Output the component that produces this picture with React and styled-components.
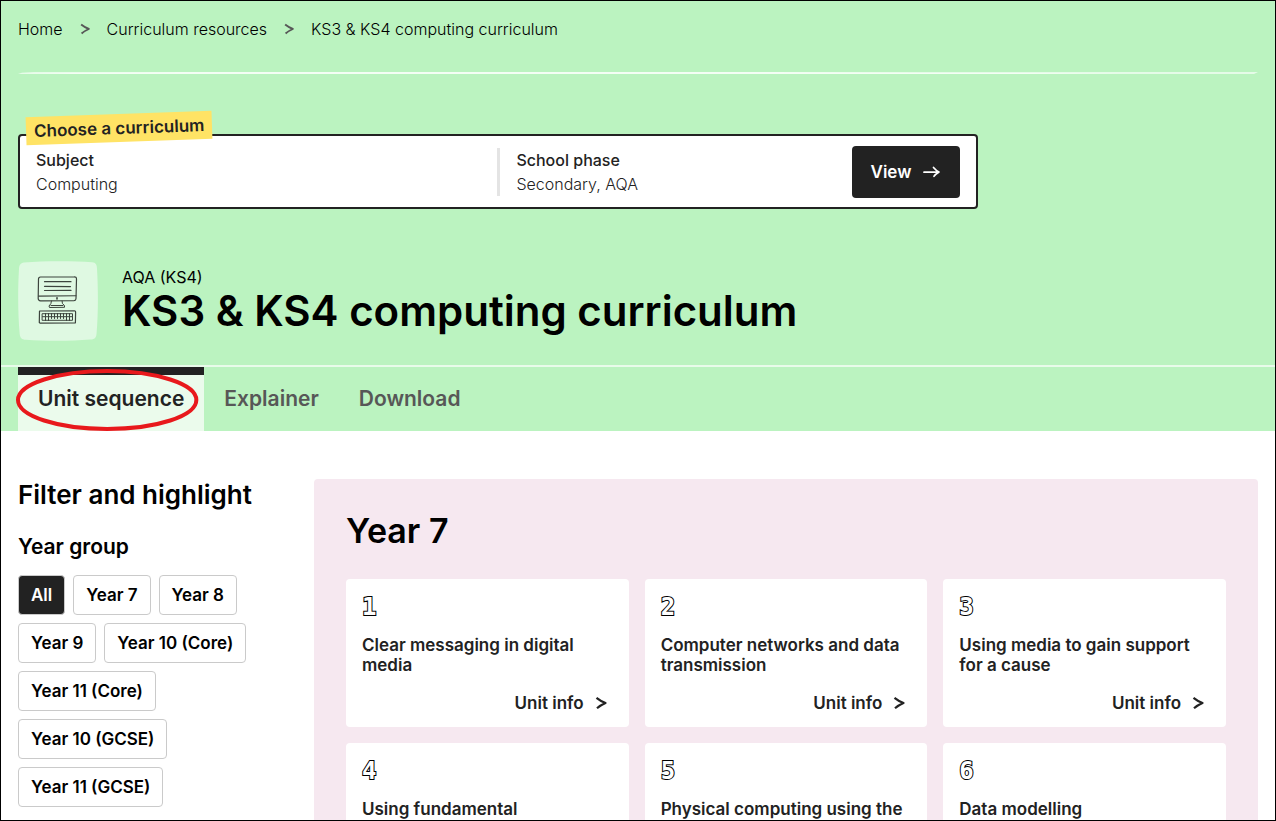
import { useState } from 'react';
import styled, { createGlobalStyle } from 'styled-components';

const GlobalStyle = createGlobalStyle`
  *, *::before, *::after {
    box-sizing: border-box;
  }
  body {
    margin: 0;
    background: #ffffff;
    color: #222222;
    font-family: Inter, "Open Sans", sans-serif;
    font-size: 16px;
    line-height: 24px;
  }
  h1, h2, h3, p, ol, ul {
    margin: 0;
    padding: 0;
  }
  ol, ul {
    list-style: none;
  }
  a {
    color: inherit;
    text-decoration: none;
  }
  button, select {
    font: inherit;
    color: inherit;
    margin: 0;
    cursor: pointer;
  }
  svg {
    display: block;
    flex: none;
  }
`

const Page = styled.div`
  height: 100vh;
  overflow: hidden;
  border: 1px solid #000000;
`
const Header = styled.header`
  background: #bbf3c0;
`
const HeaderInner = styled.div`
  padding: 16px 17px 24px;
`
const Breadcrumbs = styled.ol`
  display: flex;
  align-items: center;
  color: #000000;
  font-weight: 300;
`
const Crumb = styled.li`
  display: flex;
  align-items: center;
`
const CrumbArrow = styled.span`
  width: 44px;
  display: flex;
  justify-content: center;
  color: #575757;
`
const BrushLine = styled.svg`
  width: 100%;
  height: 3px;
  margin-top: 31px;
`
const Picker = styled.form`
  position: relative;
  display: flex;
  align-items: center;
  max-width: 960px;
  margin-top: 59px;
  padding: 10px 16px 9px 0;
  background: #ffffff;
  border: 2px solid #222222;
  border-radius: 4px;
`
const PickerTag = styled.span`
  position: absolute;
  top: -22px;
  left: 6px;
  padding: 2px 8px;
  background: #ffe365;
  font-size: 17px;
  font-weight: 600;
  transform: rotate(-2deg);
`
const Field = styled.div`
  flex: ${(props) => props.$grow} 1 0;
  display: flex;
  flex-direction: column;
  padding-left: 16px;
  border-left: ${(props) => (props.$divided ? '3px solid #e4e4e4' : 'none')};
`
const FieldLabel = styled.label`
  font-weight: 500;
`
const FieldSelect = styled.select`
  appearance: none;
  border: 0;
  padding: 0;
  background: transparent;
  height: 24px;
  font-weight: 300;
`
const ViewButton = styled.button`
  display: flex;
  align-items: center;
  justify-content: center;
  gap: 12px;
  width: 108px;
  height: 52px;
  border: 0;
  border-radius: 4px;
  background: #222222;
  color: #ffffff;
  font-size: 17px;
  font-weight: 600;
`
const TitleRow = styled.div`
  display: flex;
  align-items: center;
  gap: 24px;
  margin-top: 52px;
`
const TitleText = styled.div``
const ExamBoard = styled.p`
  color: #000000;
  line-height: 20px;
`
const Title = styled.h1`
  color: #000000;
  font-size: 42px;
  font-weight: 600;
  line-height: 48px;
`
const Tabs = styled.nav`
  display: flex;
  padding: 0 17px;
  border-top: 2px solid #e8fbea;
`
const Tab = styled.a`
  position: relative;
  display: flex;
  justify-content: center;
  height: 64px;
  padding: 12px 20px 0;
  border-top: 8px solid ${(props) => (props.$active ? '#222222' : 'transparent')};
  background: ${(props) => (props.$active ? '#ebfbec' : 'transparent')};
  color: ${(props) => (props.$active ? '#222222' : '#575757')};
  font-size: 21px;
  font-weight: 600;
`
const Ring = styled.svg`
  position: absolute;
  left: -2px;
  top: -6px;
  width: calc(100% - 4px);
  height: 62px;
  overflow: visible;
`
const Main = styled.main`
  display: grid;
  grid-template-columns: 240px minmax(0, 1fr);
  gap: 56px;
  padding: 48px 17px;
`
const Filters = styled.aside`
  color: #000000;
`
const FiltersTitle = styled.h2`
  font-size: 26px;
  font-weight: 600;
  line-height: 32px;
`
const FiltersGroup = styled.h3`
  margin: 24px 0 16px;
  font-size: 21px;
  font-weight: 600;
  line-height: 24px;
`
const Chips = styled.div`
  display: flex;
  flex-wrap: wrap;
  gap: 8px;
`
const Chip = styled.button`
  height: 40px;
  padding: 0 12px;
  border: 1px solid #cacaca;
  border-radius: 4px;
  background: ${(props) => (props.$active ? '#222222' : '#ffffff')};
  color: ${(props) => (props.$active ? '#ffffff' : '#000000')};
  font-size: 17px;
  font-weight: 600;
`
const YearPanel = styled.section`
  padding: 32px;
  border-radius: 4px;
  background: #f6e8f0;
`
const YearTitle = styled.h2`
  margin-bottom: 28px;
  color: #000000;
  font-size: 34px;
  font-weight: 600;
  line-height: 40px;
`
const Units = styled.ol`
  display: grid;
  grid-template-columns: repeat(3, minmax(0, 1fr));
  gap: 16px;
`
const UnitCard = styled.li`
  display: flex;
  flex-direction: column;
  gap: 16px;
  padding: 16px 16px 12px;
  border-radius: 4px;
  background: #ffffff;
`
const UnitNumber = styled.span`
  color: #ffffff;
  font-family: "DejaVu Sans Mono", monospace;
  font-size: 24px;
  font-weight: 700;
  line-height: 24px;
  -webkit-text-stroke: 2px #000000;
  paint-order: stroke fill;
`
const UnitTitle = styled.h3`
  min-height: 40px;
  font-size: 17px;
  font-weight: 600;
  line-height: 20px;
`
const UnitLink = styled.a`
  display: flex;
  align-items: center;
  align-self: flex-end;
  gap: 10px;
  padding-right: 5px;
  font-size: 17px;
  font-weight: 600;
`

const years = ['All', 'Year 7', 'Year 8', 'Year 9', 'Year 10 (Core)', 'Year 11 (Core)', 'Year 10 (GCSE)', 'Year 11 (GCSE)']

const units = [
  'Clear messaging in digital media',
  'Computer networks and data transmission',
  'Using media to gain support for a cause',
  'Using fundamental',
  'Physical computing using the',
  'Data modelling',
]

function Chevron({ size = 14, stroke = 2 }) {
  return (
    <svg width={size} height={size} viewBox="0 0 14 14" fill="none" stroke="currentColor" strokeWidth={stroke} aria-hidden="true">
      <path d="M2.500 1.800C5 3.800 8 5.600 11.500 7 8.500 8.300 5.500 10 3 12.300" strokeLinejoin="round" />
    </svg>
  )
}

function Arrow() {
  return (
    <svg width="18" height="14" viewBox="0 0 18 14" fill="none" stroke="currentColor" strokeWidth="1.7" strokeLinecap="round" strokeLinejoin="round" aria-hidden="true">
      <path d="M1 7.200 15.500 7M10.500 2.500C12 4.300 13.800 6 16 7 13.800 8.400 12.200 9.600 11 11.300" />
    </svg>
  )
}

function ComputerIcon() {
  return (
    <svg width="80" height="80" viewBox="0 0 80 80" fill="none" aria-hidden="true">
      <path d="M6 1.500C26-.2 55-.2 74 1.300 78 1.500 79 4 79 8 80.300 28 80.200 54 78.600 72 78.300 77 76.500 78.500 72 78.600 52 80.300 27 80.200 8 78.800 3.500 78.600 2.200 77 1.700 73-.2 52-.2 27 1 8 1.200 4 2.500 2 6 1.500Z" fill="#dff9e2" />
      <g stroke="#3c443d" strokeLinecap="round" strokeLinejoin="round">
        <path d="M22.500 16 56 15.800Q58.500 15.700 58.500 18L58 37.500Q58 39.500 56 39.700L22.500 39.800Q20.300 39.700 20.200 37.500L20.500 18Q20.500 16.100 22.500 16Z" strokeWidth="1.200" />
        <path d="M20.500 35.100 58 34.800" strokeWidth="1.100" />
        <path d="M26.500 20.700 53 20.700M26.500 25.300 52.500 25.600M26.500 29.500 53 29.400" strokeWidth="1.200" />
        <path d="M33.500 40Q33.500 43 31 45L31.500 46.500 46.500 46.300 46.500 44.500Q43.500 43 44 40M33 44.500 45 44.500" strokeWidth="1" />
        <path d="M39 36.700V38" strokeWidth="1.600" />
        <path d="M21.500 50 56.500 49.800Q57.700 49.800 57.600 51.500L57.400 61.800 22 62.100 21.300 61.500Z" strokeWidth="1.200" />
        <path d="M24.500 52.700H54.500V59.300H24.500ZM24.500 55.700H54.500M27.500 52.500V59.500M30.500 52.500V59.500M33.500 52.500V57.500M36.500 52.500V57.500M39.500 52.500V57.500M42.500 52.500V57.500M45.500 52.500V57.500M48.500 52.500V59.500M51.500 52.500V59.500" strokeWidth="1" />
      </g>
    </svg>
  )
}

function App() {
  const [year, setYear] = useState('All')

  return (
    <Page>
      <GlobalStyle />
      <Header>
        <HeaderInner>
          <nav aria-label="Breadcrumb">
            <Breadcrumbs>
              <Crumb><a href="#home">Home</a></Crumb>
              <Crumb>
                <CrumbArrow><Chevron size={12} stroke={2.2} /></CrumbArrow>
                <a href="#curriculum">Curriculum resources</a>
              </Crumb>
              <Crumb>
                <CrumbArrow><Chevron size={12} stroke={2.2} /></CrumbArrow>
                <a href="#computing">KS3 &amp; KS4 computing curriculum</a>
              </Crumb>
            </Breadcrumbs>
          </nav>
          {/* chalky divider, a little thinner towards both ends */}
          <BrushLine viewBox="0 0 1240 3" preserveAspectRatio="none" aria-hidden="true">
            <path d="M4 .8 16 .2 180 0 640 0 900 .2 1240 .2 1236 1.800 1100 1.800 900 2 700 2 300 2 60 2 0 1.800Z" fill="#f4fef5" />
          </BrushLine>
          <Picker onSubmit={(e) => e.preventDefault()}>
            <PickerTag>Choose a curriculum</PickerTag>
            <Field $grow={11}>
              <FieldLabel htmlFor="subject">Subject</FieldLabel>
              <FieldSelect id="subject">
                <option>Computing</option>
              </FieldSelect>
            </Field>
            <Field $grow={8} $divided>
              <FieldLabel htmlFor="phase">School phase</FieldLabel>
              <FieldSelect id="phase">
                <option>Secondary, AQA</option>
              </FieldSelect>
            </Field>
            <ViewButton type="submit">View <Arrow /></ViewButton>
          </Picker>
          <TitleRow>
            <ComputerIcon />
            <TitleText>
              <ExamBoard>AQA (KS4)</ExamBoard>
              <Title>KS3 &amp; KS4 computing curriculum</Title>
            </TitleText>
          </TitleRow>
        </HeaderInner>
        <Tabs>
          <Tab href="#units" $active>
            Unit sequence
            <Ring viewBox="0 0 182 62" preserveAspectRatio="none" aria-hidden="true">
              <ellipse cx="91" cy="31" rx="89" ry="29" fill="none" stroke="#e8191c" strokeWidth="4" />
            </Ring>
          </Tab>
          <Tab href="#explainer">Explainer</Tab>
          <Tab href="#download">Download</Tab>
        </Tabs>
      </Header>
      <Main>
        <Filters>
          <FiltersTitle>Filter and highlight</FiltersTitle>
          <FiltersGroup>Year group</FiltersGroup>
          <Chips>
            {years.map((name) => (
              <Chip key={name} type="button" $active={name === year} aria-pressed={name === year} onClick={() => setYear(name)}>
                {name}
              </Chip>
            ))}
          </Chips>
        </Filters>
        <YearPanel>
          <YearTitle>Year 7</YearTitle>
          <Units>
            {units.map((title, i) => (
              <UnitCard key={title}>
                <UnitNumber>{i + 1}</UnitNumber>
                <UnitTitle>{title}</UnitTitle>
                <UnitLink href={`#unit-${i + 1}`}>Unit info <Chevron stroke={2.2} /></UnitLink>
              </UnitCard>
            ))}
          </Units>
        </YearPanel>
      </Main>
    </Page>
  )
}

export default App
